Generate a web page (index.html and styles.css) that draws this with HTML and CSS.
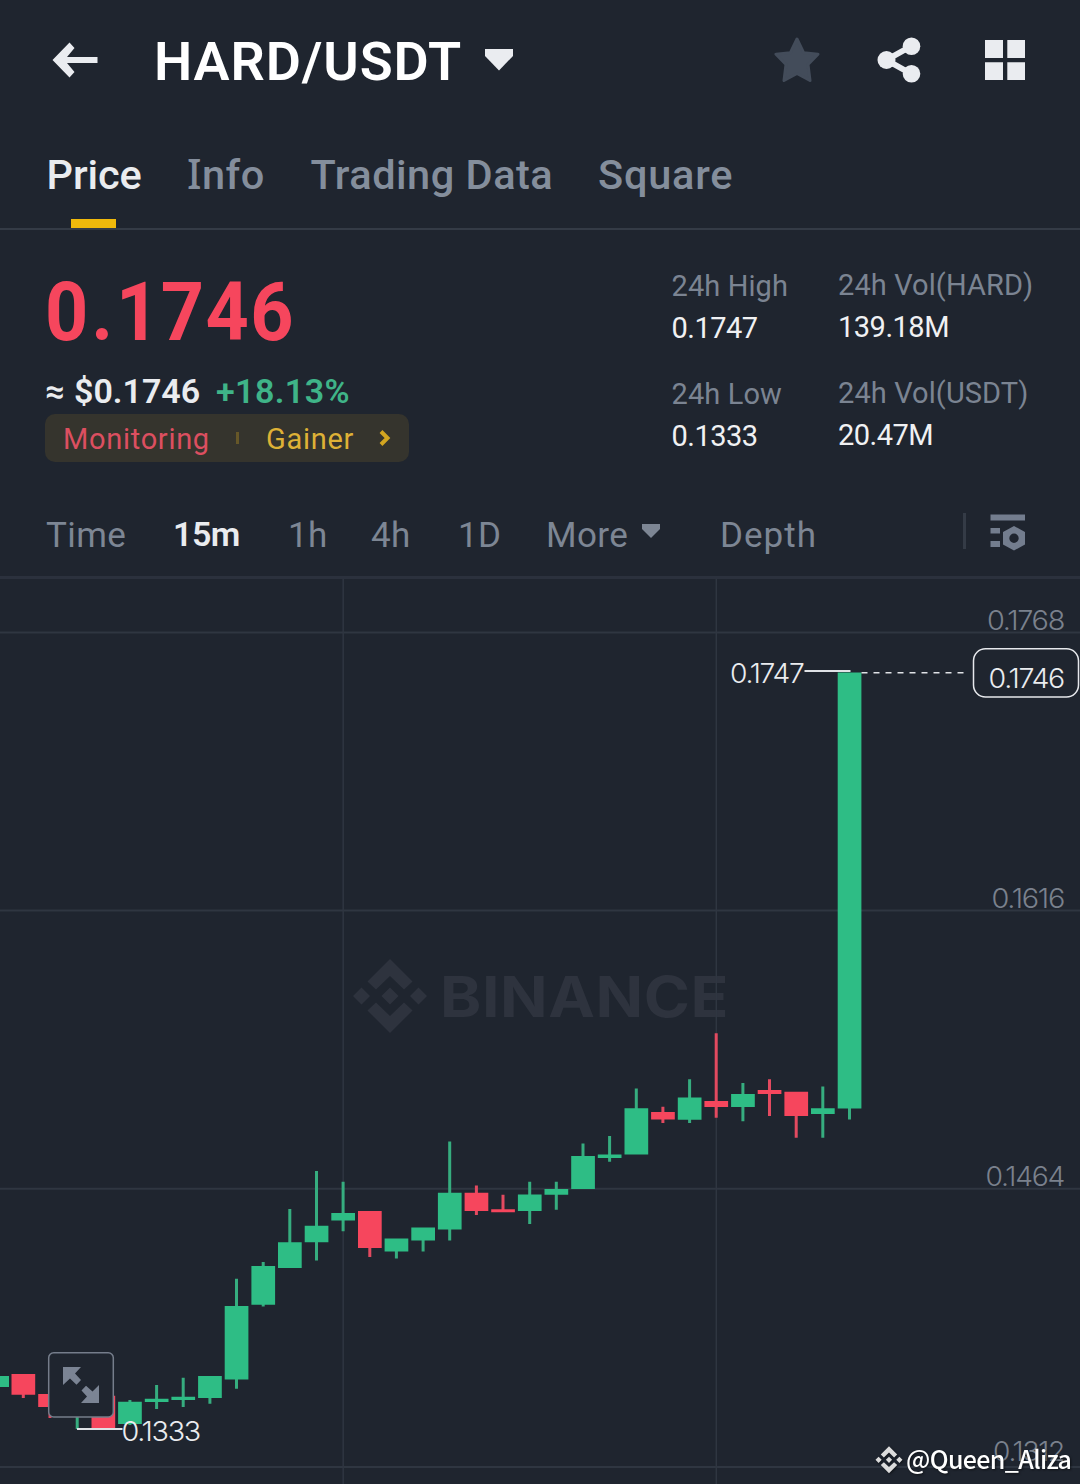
FILE: index.html
```html
<!DOCTYPE html>
<html lang="en">
<head>
<meta charset="utf-8">
<title>HARD/USDT</title>
<link rel="stylesheet" href="styles.css">
</head>
<body>
<main class="app">
  <header class="header">
    <svg class="back" width="46" height="38" viewBox="0 0 46 38"><path d="M45.500 16H15L22.500 7 17.500 1.500 0.500 19 17.500 36.500 22.500 31 15 22H45.500Z"/></svg>
    <h1 class="pair">HARD/USDT</h1>
    <svg class="caret" width="28" height="22" viewBox="0 0 28 22"><path d="M0 0H28V7L14 21.500 0 7Z"/></svg>
    <div class="actions">
      <svg class="star" width="46" height="46" viewBox="0 0 46 46"><path d="M23 2 29.700 15.800 44 17.200 34 27.500 36 43.500 23 36.500 10 43.500 12 27.500 2 17.200 16.300 15.800Z"/></svg>
      <svg class="share" width="44" height="46" viewBox="0 0 44 46"><path d="M34.500 9 9.500 23 34.500 37" fill="none" stroke="currentColor" stroke-width="6"/><circle cx="9.500" cy="23" r="9"/><circle cx="34.500" cy="9.200" r="8.800"/><circle cx="34.500" cy="36.800" r="8.800"/></svg>
      <svg class="apps" width="40" height="40" viewBox="0 0 40 40"><path d="M0 0H18V18H0ZM22.300 0H40V18H22.300ZM0 22.300H18V40H0ZM22.300 22.300H40V40H22.300Z"/></svg>
    </div>
  </header>

  <nav class="tabs">
    <span class="tab active">Price</span>
    <span class="tab"><span class="slab">I</span>nfo</span>
    <span class="tab">Trading Data</span>
    <span class="tab square">Square</span>
  </nav>

  <section class="ticker">
    <div class="quote">
      <div class="last">0<span class="point">.</span>1746</div>
      <div class="fiat"><span class="approx">≈</span><span class="usd">$0.1746</span><span class="change">+18.13%</span></div>
      <div class="chip">
        <span class="monitoring">Monitoring</span>
        <i class="chip-rule"></i>
        <span class="gainer">Gainer</span>
        <svg width="12" height="18" viewBox="0 0 12 18"><path d="M2 2.500 8.500 9 2 15.500" fill="none" stroke="#d2a520" stroke-width="4"/></svg>
      </div>
    </div>
    <dl class="stats">
      <div><dt>24h High</dt><dd>0.1747</dd></div>
      <div><dt>24h Low</dt><dd>0.1333</dd></div>
    </dl>
    <dl class="stats volume">
      <div><dt>24h Vol(HARD)</dt><dd>139.18M</dd></div>
      <div><dt>24h Vol(USDT)</dt><dd>20.47M</dd></div>
    </dl>
  </section>

  <nav class="intervals">
    <span>Time</span>
    <span class="selected">15m</span>
    <span>1h</span>
    <span>4h</span>
    <span>1D</span>
    <span class="more">More<svg width="18" height="14" viewBox="0 0 18 14"><path d="M0 0H18V5L9 14 0 5Z"/></svg></span>
    <span class="depth">Depth</span>
    <i class="rule"></i>
    <svg class="settings" width="36" height="37" viewBox="0 0 36 37"><path d="M.5.500H35V6.500H.5ZM.5 14H10V19.500H.5ZM.5 27H10V33H.5Z"/><path fill-rule="evenodd" d="M24 12 35 18V30.500L24 36.500 13 30.500V18ZM24 19.500A4.700 4.700 0 1 0 24 28.900 4.700 4.700 0 1 0 24 19.500Z"/></svg>
  </nav>

  <svg class="chart" width="1080" height="905" viewBox="0 579 1080 905">
    <defs>
      <g id="logo">
        <path d="M0-37 22.500-14.500 14-6.500 0-20-14-6.500-22.500-14.500ZM0 37 22.500 14.500 14 6.500 0 20-14 6.500-22.500 14.500ZM0-8.500 8.500 0 0 8.500-8.500 0ZM-28.500-8.500-20 0-28.500 8.500-37 0ZM28.500-8.500 37 0 28.500 8.500 20 0Z"/>
      </g>
    </defs>
    <g class="brand">
      <use href="#logo" x="390" y="996"/>
      <text x="440" y="1016.500" textLength="289" lengthAdjust="spacingAndGlyphs">BINANCE</text>
    </g>
    <path class="grid" d="M0 632.500H1080M0 910.500H1080M0 1188.800H1080M0 1467H1080"/>
    <path class="grid thin" d="M343.200 579V1484M716.300 579V1484"/>

    <path class="wick up" d="M849.500 1108V1119.500M822.800 1086.500V1137.700M742.900 1083V1121.300M689.600 1079.300V1123M636.300 1088.500V1110M609.600 1136V1161.700M583 1143.500V1158M556.300 1181.700V1209.700M529.700 1181.700V1224M449.700 1141.500V1240.500M423.100 1240V1251.500M396.400 1251V1258.500M343.100 1181.700V1231.300M316.500 1171V1260.500M289.800 1209V1244M263.200 1262V1306.500M236.500 1278.700V1388.700M209.900 1397V1403.700M183.200 1377.700V1407M156.600 1385V1409M129.900 1400V1425M77.200 1400V1429"/>
    <path class="wick down" d="M796.200 1115V1137.700M769.500 1079.300V1116M716.200 1033.300V1117.700M662.900 1106.700V1123M503 1194.700V1212M476.400 1185.500V1215M369.800 1247V1257M50 1400V1418M23.300 1394V1398"/>
    <path class="body up" d="M837.700 672.500h23.700v436h-23.700zM811 1108.300h23.700v5.700h-23.700zM731.100 1094h23.700v13h-23.700zM677.800 1097.600h23.700v22.100h-23.700zM624.500 1108.300h23.700v46.200h-23.700zM597.800 1154.400h23.700v3.600h-23.700zM571.200 1156h23.700v33h-23.700zM544.500 1189h23.700v5.700h-23.700zM517.900 1194.500h23.700v16.500h-23.700zM437.900 1192.700h23.700v36.900h-23.700zM411.300 1227.400h23.700v13.100h-23.700zM384.600 1238.400h23.700v13.200h-23.700zM331.300 1213h23.700v7.400h-23.700zM304.700 1225.700h23.700v16.600h-23.700zM278 1242.200h23.700v25.800h-23.700zM251.400 1266h23.700v38.700h-23.700zM224.700 1306h23.700v73.600h-23.700zM198.100 1376h23.700v22h-23.700zM171.400 1396.700h23.700v3.300h-23.700zM144.800 1398.700h23.700v3.300h-23.700zM118.100 1401.700h23.700v22.300h-23.700zM0 1376h9v11h-9z"/>
    <path class="body down" d="M784.400 1091.800h23.700v24.200h-23.700zM757.700 1090h23.700v4h-23.700zM704.400 1101h23.700v6h-23.700zM651.100 1112h23.700v7.600h-23.700zM491.200 1209.200h23.700v3h-23.700zM464.600 1192.700h23.700v18.300h-23.700zM358 1211h23.700v37h-23.700zM91.500 1395.700h23.700v33.100h-23.700zM38.200 1394h23.700v13h-23.700zM11.500 1374h23.700v20.700h-23.700z"/>

    <path class="pointer" d="M804.500 671H850.500M77 1429H122.500"/>
    <path class="pointer dashed" d="M861.500 672.700H966"/>
    <rect class="badge" x="973.500" y="648.700" width="105" height="48.300" rx="12"/>

    <g class="axis">
      <text x="987" y="630.300" textLength="77" lengthAdjust="spacingAndGlyphs">0.1768</text>
      <text x="991.500" y="908.300" textLength="72.500" lengthAdjust="spacingAndGlyphs">0.1616</text>
      <text x="985.500" y="1186.300" textLength="78.500" lengthAdjust="spacingAndGlyphs">0.1464</text>
      <text x="993" y="1461" textLength="71" lengthAdjust="spacingAndGlyphs">0.1312</text>
    </g>
    <g class="axis bright">
      <text x="730" y="683" textLength="73.500" lengthAdjust="spacingAndGlyphs">0.1747</text>
      <text x="988.500" y="688" textLength="75.500" lengthAdjust="spacingAndGlyphs">0.1746</text>
      <text x="121.500" y="1441" textLength="78.500" lengthAdjust="spacingAndGlyphs">0.1333</text>
    </g>

    <g class="expand">
      <rect x="48.700" y="1352.700" width="64.600" height="64.300" rx="5"/>
      <path d="M63 1367H81L75 1373.500 81 1380 76.500 1384.700 70 1378.500 63 1385ZM99 1403H81L87 1396.500 81.500 1390.500 86 1385.700 92.500 1391.500 99 1385Z"/>
    </g>

    <g class="author">
      <use href="#logo" transform="translate(889 1459.800) scale(.365)"/>
      <text x="906" y="1469.300" textLength="166">@Queen_Aliza</text>
    </g>
  </svg>
</main>
</body>
</html>
```
FILE: styles.css
```css
* { box-sizing: border-box; }
body {
  margin: 0;
  background: #1f252f;
  color: #eaecef;
  font-family: Roboto, "Liberation Sans", sans-serif;
}
.app { width: 1080px; height: 1484px; overflow: hidden; }
svg { display: block; fill: currentColor; flex: none; }

.header {
  height: 120px;
  padding: 0 55px 0 52px;
  display: flex;
  align-items: center;
  color: #eaecf0;
}
.pair {
  width: 329px;
  margin: 4px 0 0 56px;
  font-size: 54px;
  font-weight: 600;
  line-height: 64px;
  letter-spacing: .9px;
  color: #fff;
}
.caret { margin-left: 2px; }
.actions { margin-left: auto; display: flex; align-items: center; }
.star { color: #434c5a; }
.star path { stroke: #434c5a; stroke-width: 3; stroke-linejoin: round; }
.share { margin: 0 64px 0 57px; }

.tabs {
  height: 110px;
  padding: 0 46.500px;
  display: grid;
  grid-template-columns: 140.500px 123.500px 287.500px auto;
  border-bottom: 2px solid #343b46;
  font-size: 41.500px;
  font-weight: 500;
  line-height: 110px;
  letter-spacing: .5px;
  color: #848e9c;
  white-space: nowrap;
}
.tab.active { color: #eaecef; letter-spacing: -.1px; display: flex; flex-direction: column; height: 108px; }
.tab.active::after {
  content: "";
  flex: none;
  width: 45px;
  height: 9px;
  margin: -11px 0 0 24.500px;
  background: #f0b90b;
}
.slab { font-family: "Noto Sans", sans-serif; font-size: 41px; line-height: 1; }
.square { letter-spacing: .8px; }

.ticker {
  height: 264px;
  padding: 0 45px;
  display: grid;
  grid-template-columns: 626.500px 166.500px auto;
  white-space: nowrap;
}
.quote { padding-top: 40px; }
.last {
  font-size: 82px;
  font-weight: 700;
  line-height: 84px;
  letter-spacing: 1.600px;
  color: #f6465d;
  transform: scaleX(.92);
  transform-origin: left;
}
.point { margin: 0 1.500px; }
.fiat {
  margin-top: 14px;
  display: flex;
  font-size: 34px;
  font-weight: 600;
  line-height: 47px;
  height: 46px;
}
.approx { width: 29px; }
.usd { width: 142px; }
.change { color: #3fb488; letter-spacing: .4px; }
.chip {
  width: 364px;
  height: 48px;
  padding: 0 18px 0 18px;
  display: flex;
  align-items: center;
  border-radius: 10px;
  background: #35342d;
  font-size: 29px;
  line-height: 46px;
  letter-spacing: .7px;
}
.chip span { padding-top: 2px; }
.chip-rule { width: 3px; height: 12px; margin-left: auto; background: #665728; }
.monitoring { width: 146px; color: #dc4f60; }
.gainer { margin: 0 23px 0 27px; width: 90px; color: #deb136; }

.stats {
  margin: 0;
  padding-top: 35px;
  display: flex;
  flex-direction: column;
  gap: 24px;
  font-size: 29px;
  line-height: 42px;
}
.volume { padding-top: 34px; }
.stats dt { color: #7b8492; letter-spacing: .1px; }
.stats dd { margin: 0; font-weight: 450; letter-spacing: -.5px; color: #f0f1f3; }

.intervals {
  height: 85px;
  padding: 0 53px 0 46px;
  display: grid;
  grid-template-columns: 127px 115px 83px 87px 88px 174px 243px 27px 36px;
  align-items: center;
  border-bottom: 3px solid #2b313d;
  font-size: 35px;
  letter-spacing: .4px;
  line-height: 46px;
  color: #7d8694;
  white-space: nowrap;
}
.intervals span { padding-top: 1px; }
.intervals .selected { padding: 0 0 2px; font-size: 34px; font-weight: 600; letter-spacing: -.5px; color: #eaecef; }
.depth { letter-spacing: 1px; }
.more { display: flex; gap: 14px; }
.more svg { margin-top: 11px; }
.rule { width: 3px; height: 36px; margin-top: -8px; background: #343b46; }
.settings { margin-top: -6px; color: #737d8e; }

.grid { fill: none; stroke: #2f3641; stroke-width: 2; }
.thin { stroke-width: 1.500; }
.brand { fill: #2e333e; font: 700 57px Inter, "Liberation Sans", sans-serif; letter-spacing: .5px; }
.wick { fill: none; stroke-width: 3; }
.wick.up { stroke: #36ad7f; }
.wick.down { stroke: #e34a60; }
.body.up { fill: #2ebd85; }
.body.down { fill: #f6465d; }
.pointer { fill: none; stroke: #dfe2e6; stroke-width: 1.800; }
.dashed { stroke-dasharray: 6 6; stroke-width: 1.500; }
.badge { fill: #1f252f; stroke: #e6e8ec; stroke-width: 1.500; }
.axis { fill: #7a818d; font: 300 26.500px Inter, "Liberation Sans", sans-serif; letter-spacing: -1.200px; }
.bright { fill: #eaecef; }
.expand rect { fill: #1f252f; stroke: #757d8b; stroke-width: 1.500; }
.expand path { fill: #7b8494; }
.author { fill: #dcdcdc; filter: drop-shadow(1px 1px 1px #0008); }
.author text { fill: #fff; font: 500 25px "Noto Sans CJK SC", sans-serif; }
```
